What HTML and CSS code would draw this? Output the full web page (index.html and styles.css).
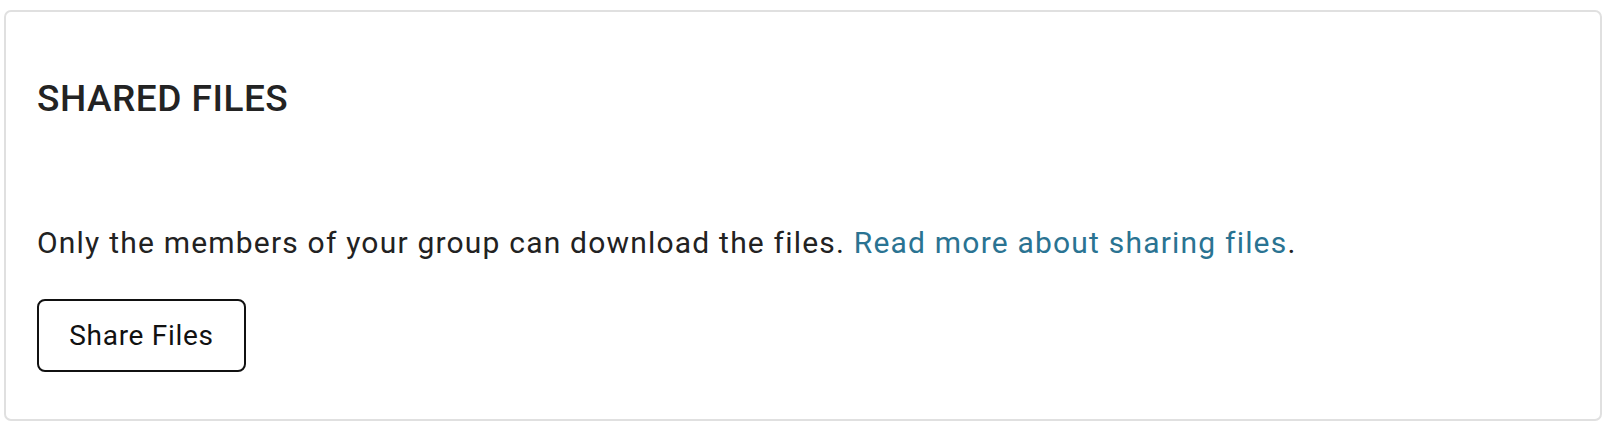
FILE: index.html
```html
<!DOCTYPE html>
<html lang="en">
<head>
    <meta charset="UTF-8">
    <meta name="viewport" content="width=device-width, initial-scale=1.0">
    <title>Shared Files</title>
    <link rel="stylesheet" href="styles.css">
</head>
<body>
    <div class="files-card">
        <h2>SHARED FILES</h2>
        <p class="files-note">Only the members of your group can download the files. <a href="#">Read more about sharing files</a>.</p>
        <button class="share-button">Share Files</button>
    </div>
</body>
</html>
```

FILE: styles.css
```css
body {
    margin: 0;
    font-family: 'Roboto', 'Liberation Sans', sans-serif;
    background-color: #fff;
    color: #222;
}

.files-card {
    margin: 10px 12px 0 4px;
    padding: 65px 31px 47px;
    border: 2px solid #e0e0e0;
    border-radius: 7px;
}

.files-card h2 {
    margin: 0 0 102px;
    font-size: 37px;
    line-height: 44px;
    font-weight: 500;
    letter-spacing: 0.5px;
    color: #232323;
}

.files-note {
    margin: 0 0 36px;
    font-size: 30px;
    line-height: 40px;
    letter-spacing: 1.2px;
}

.files-note a {
    color: #2a7392;
    text-decoration: none;
}

.share-button {
    display: block;
    width: 209px;
    height: 73px;
    padding: 0;
    background-color: #fff;
    border: 2px solid #111;
    border-radius: 8px;
    font-family: inherit;
    font-size: 28px;
    letter-spacing: 0.7px;
    color: #111;
    cursor: pointer;
}
```
